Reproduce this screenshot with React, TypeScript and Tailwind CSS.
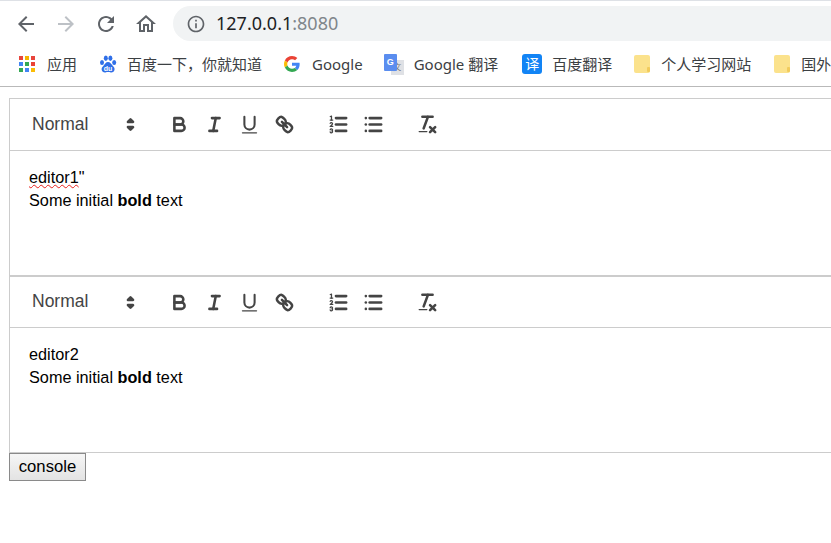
import type { ReactNode } from 'react'

const CJK = 'font-["Noto_Sans","Noto_Sans_CJK_SC",sans-serif]'

function Nav({ d, className }: { d: string; className: string }) {
  return (
    <svg viewBox="0 0 24 24" className={`shrink-0 ${className}`} fill="currentColor">
      <path d={d} />
    </svg>
  )
}

function AppsIcon() {
  const colors = ['#e8453c', '#f4b400', '#e8453c', '#4285f4', '#34a853', '#ea4335', '#34a853', '#4285f4', '#fbbc05']
  return (
    <div className="grid h-[16px] w-[16px] grid-cols-3 gap-[2px]">
      {colors.map((c, i) => (
        <div key={i} style={{ backgroundColor: c }} />
      ))}
    </div>
  )
}

function BaiduIcon() {
  return (
    <svg viewBox="0 0 18 18" className="h-[18px] w-[18px]" fill="#2f6fe8">
      <ellipse cx="3" cy="7.5" rx="2" ry="2.6" />
      <ellipse cx="6.8" cy="3.2" rx="2" ry="2.7" />
      <ellipse cx="11.4" cy="3.2" rx="2" ry="2.7" />
      <ellipse cx="15.2" cy="7.5" rx="2" ry="2.6" />
      <path d="M9 7c-2.2 0-3 2-4.3 3.4C3 12 2.2 13.4 2.8 15.2 3.4 17 5 17.6 6.4 17.4c1-.1 1.8-.3 2.7-.3s1.700.2 2.700.3c1.400.2 3-.4 3.600-2.200.6-1.800-.2-3.200-1.900-4.800C12.200 9 11.200 7 9 7z" />
      <text x="9" y="15.600" textAnchor="middle" fontSize="7" fontWeight="700" fill="#fff" fontFamily="Liberation Sans, sans-serif">du</text>
    </svg>
  )
}

function GoogleIcon() {
  return (
    <svg viewBox="0 0 48 48" className="h-[16px] w-[16px]">
      <path fill="#EA4335" d="M24 9.500c3.540 0 6.710 1.220 9.210 3.600l6.850-6.850C35.900 2.380 30.470 0 24 0 14.620 0 6.510 5.380 2.560 13.220l7.980 6.190C12.430 13.720 17.740 9.500 24 9.500z" />
      <path fill="#4285F4" d="M46.980 24.550c0-1.570-.15-3.090-.38-4.550H24v9.020h12.940c-.58 2.960-2.260 5.480-4.780 7.180l7.730 6c4.510-4.180 7.090-10.360 7.090-17.650z" />
      <path fill="#FBBC05" d="M10.530 28.590c-.48-1.450-.76-2.990-.76-4.590s.270-3.140.760-4.590l-7.980-6.190C.92 16.460 0 20.120 0 24c0 3.880.92 7.540 2.560 10.780l7.970-6.190z" />
      <path fill="#34A853" d="M24 48c6.480 0 11.930-2.130 15.890-5.810l-7.730-6c-2.150 1.450-4.920 2.300-8.160 2.300-6.260 0-11.570-4.220-13.470-9.910l-7.980 6.190C6.510 42.620 14.620 48 24 48z" />
    </svg>
  )
}

function TranslateIcon() {
  return (
    <div className="relative h-[21px] w-[20px]">
      <div className="absolute right-0 bottom-0 flex h-[15px] w-[13px] items-center justify-center bg-[#dfe1e5] text-[8px] leading-none text-[#777]">文</div>
      <div className="absolute top-0 left-0 flex h-[17px] w-[13px] items-center justify-center rounded-[1px] bg-[#5a8def] font-['Liberation_Sans'] text-[9px] font-bold leading-none text-white">G</div>
    </div>
  )
}

function FanyiIcon() {
  return (
    <div className="flex h-[20px] w-[20px] items-center justify-center rounded-[3px] bg-[#1284f5] text-[14px] leading-none text-white">译</div>
  )
}

function FolderIcon() {
  return (
    <div className="relative h-[18px] w-[16px] rounded-[2px] bg-[#fbe28c]">
      <div className="absolute right-0 bottom-[1px] h-[5px] w-[3px] rounded-[1px] bg-[#f1cb5c]" />
    </div>
  )
}

function Bookmark({ icon, label, gap }: { icon: ReactNode; label: string; gap: string }) {
  return (
    <div className={`flex shrink-0 items-center ${gap}`}>
      {icon}
      <span className="whitespace-nowrap text-[15px] leading-none text-[#3c4043]">{label}</span>
    </div>
  )
}

function QlIcon({ children }: { children: ReactNode }) {
  return (
    <svg viewBox="0 0 18 18" className="h-[23px] w-[23px] shrink-0" fill="none" stroke="#444" strokeWidth="2" strokeLinecap="round" strokeLinejoin="round">
      {children}
    </svg>
  )
}

function ToolButton({ children }: { children: ReactNode }) {
  return <div className="flex w-[35px] shrink-0 items-center justify-center">{children}</div>
}

function Toolbar({ height }: { height: string }) {
  return (
    <div className={`flex items-center border-b border-[#ccc] pl-[22px] font-['Liberation_Sans',sans-serif] ${height}`}>
      <div className="flex w-[130px] shrink-0 items-center">
        <span className="text-[17.500px] leading-none text-[#444]">Normal</span>
        <svg viewBox="0 0 18 18" className="ml-[31px] h-[23px] w-[23px]" fill="#444" stroke="#444" strokeWidth="2" strokeLinejoin="round">
          <polygon points="7 11 9 13 11 11 7 11" />
          <polygon points="7 7 9 5 11 7 7 7" />
        </svg>
      </div>
      <ToolButton>
        <QlIcon>
          <path d="M5,4H9.500A2.500,2.500,0,0,1,12,6.500v0A2.500,2.500,0,0,1,9.500,9H5A0,0,0,0,1,5,9V4A0,0,0,0,1,5,4Z" />
          <path d="M5,9h5.500A2.500,2.500,0,0,1,13,11.500v0A2.500,2.500,0,0,1,10.500,14H5a0,0,0,0,1,0,0V9A0,0,0,0,1,5,9Z" />
        </QlIcon>
      </ToolButton>
      <ToolButton>
        <QlIcon>
          <line x1="7" x2="13" y1="4" y2="4" />
          <line x1="5" x2="11" y1="14" y2="14" />
          <line x1="8" x2="10" y1="14" y2="4" />
        </QlIcon>
      </ToolButton>
      <ToolButton>
        <QlIcon>
          <path strokeWidth="1.600" d="M5,3V9a4.012,4.012,0,0,0,4,4H9a4.012,4.012,0,0,0,4-4V3" />
          <rect x="3" y="15" width="12" height="1" rx=".5" ry=".5" fill="#444" stroke="none" />
        </QlIcon>
      </ToolButton>
      <ToolButton>
        <QlIcon>
          <line x1="7" x2="11" y1="7" y2="11" />
          <path d="M8.900,4.577a3.476,3.476,0,0,1,.36,4.679A3.476,3.476,0,0,1,4.577,8.900C3.185,7.500,2.035,6.400,4.217,4.217S7.500,3.185,8.900,4.577Z" />
          <path d="M13.423,9.100a3.476,3.476,0,0,0-4.679-.36,3.476,3.476,0,0,0,.36,4.679c1.392,1.392,2.500,2.542,4.679.36S14.815,10.500,13.423,9.100Z" />
        </QlIcon>
      </ToolButton>
      <div className="w-[19px] shrink-0" />
      <ToolButton>
        <QlIcon>
          <line x1="7" x2="15" y1="4" y2="4" />
          <line x1="7" x2="15" y1="9" y2="9" />
          <line x1="7" x2="15" y1="14" y2="14" />
          <line strokeWidth="1" x1="2.500" x2="4.500" y1="5.500" y2="5.500" />
          <path fill="#444" stroke="none" d="M3.500,6A0.500,0.500,0,0,1,3,5.500V3.085l-0.276.138A0.500,0.500,0,0,1,2.053,3c-0.124-.247-0.023-0.324.224-0.447l1-.5A0.500,0.500,0,0,1,4,2.500v3A0.500,0.500,0,0,1,3.500,6Z" />
          <path strokeWidth="1" d="M4.500,10.500h-2c0-.234,1.850-1.076,1.850-2.234A0.959,0.959,0,0,0,2.500,8.156" />
          <path strokeWidth="1" d="M2.500,14.846a0.959,0.959,0,0,0,1.850-.109A0.700,0.700,0,0,0,3.750,14a0.688,0.688,0,0,0,.6-0.736,0.959,0.959,0,0,0-1.850-.109" />
        </QlIcon>
      </ToolButton>
      <ToolButton>
        <QlIcon>
          <line x1="6" x2="15" y1="4" y2="4" />
          <line x1="6" x2="15" y1="9" y2="9" />
          <line x1="6" x2="15" y1="14" y2="14" />
          <line x1="3" x2="3" y1="4" y2="4" />
          <line x1="3" x2="3" y1="9" y2="9" />
          <line x1="3" x2="3" y1="14" y2="14" />
        </QlIcon>
      </ToolButton>
      <div className="w-[19px] shrink-0" />
      <ToolButton>
        <QlIcon>
          <line x1="5" x2="13" y1="3" y2="3" />
          <line x1="6" x2="9.350" y1="12" y2="3" />
          <line x1="11" x2="15" y1="11" y2="15" />
          <line x1="15" x2="11" y1="11" y2="15" />
          <rect x="2" y="14" width="7" height="1" rx=".5" ry=".5" fill="#444" stroke="none" />
        </QlIcon>
      </ToolButton>
    </div>
  )
}

function Editor({ first, toolbarHeight }: { first: ReactNode; toolbarHeight: string }) {
  return (
    <div className="border border-[#ccc]">
      <Toolbar height={toolbarHeight} />
      <div className="h-[124px] px-[19px] pt-[15px] font-['Liberation_Sans',sans-serif] text-[16.250px] leading-[23px] text-black">
        <p>{first}</p>
        <p>
          Some initial <strong className="font-bold">bold</strong> text
        </p>
      </div>
    </div>
  )
}

export default function App() {
  return (
    <div className="h-[543px] w-[831px] overflow-hidden bg-white">
      {/* browser chrome */}
      <div className={`h-[87px] border-t border-b border-t-[#dee1e6] border-b-[#b9b9b9] ${CJK}`}>
        <div className="flex h-[40px] items-center pt-[5px]">
          <Nav className="ml-[14px] h-[24px] w-[24px] text-[#5f6368]" d="M20 11H7.830l5.590-5.590L12 4l-8 8 8 8 1.410-1.410L7.830 13H20v-2z" />
          <Nav className="ml-[16px] h-[24px] w-[24px] text-[#bdc1c6]" d="M12 4l-1.410 1.410L16.170 11H4v2h12.170l-5.580 5.590L12 20l8-8z" />
          <Nav className="ml-[16px] h-[24px] w-[24px] text-[#5f6368]" d="M17.650 6.350C16.200 4.900 14.210 4 12 4c-4.420 0-7.990 3.580-7.990 8s3.570 8 7.990 8c3.730 0 6.840-2.550 7.730-6h-2.080c-.82 2.330-3.040 4-5.650 4-3.310 0-6-2.690-6-6s2.690-6 6-6c1.660 0 3.140.69 4.220 1.780L13 11h7V4l-2.350 2.350z" />
          <Nav className="ml-[16px] h-[24px] w-[24px] text-[#5f6368]" d="M12 5.690l5 4.500V18h-2v-6H9v6H7v-7.810l5-4.500M12 3L2 12h3v8h6v-6h2v6h6v-8h3L12 3z" />
          <div className="ml-[15px] flex h-[35px] w-[720px] shrink-0 items-center rounded-full bg-[#f1f3f4] pl-[13px]">
            <Nav className="h-[20px] w-[20px] text-[#5f6368]" d="M11 7h2v2h-2zm0 4h2v6h-2zm1-9C6.480 2 2 6.480 2 12s4.480 10 10 10 10-4.480 10-10S17.520 2 12 2zm0 18c-4.410 0-8-3.590-8-8s3.590-8 8-8 8 3.590 8 8-3.590 8-8 8z" />
            <span className="ml-[10px] pb-[2px] text-[18px] leading-none text-[#202124]">
              127.0.0.1<span className="text-[#80868b]">:8080</span>
            </span>
          </div>
        </div>
        <div className="flex h-[45px] items-center gap-[22px] pt-[1px] pl-[19px]">
          <Bookmark icon={<AppsIcon />} label="应用" gap="gap-[12px]" />
          <Bookmark icon={<BaiduIcon />} label="百度一下，你就知道" gap="gap-[10px]" />
          <Bookmark icon={<GoogleIcon />} label="Google" gap="gap-[12px] -mr-[1px]" />
          <Bookmark icon={<TranslateIcon />} label="Google 翻译" gap="gap-[10px] mr-[2px]" />
          <Bookmark icon={<FanyiIcon />} label="百度翻译" gap="gap-[10px]" />
          <Bookmark icon={<FolderIcon />} label="个人学习网站" gap="gap-[11px] mr-[1px]" />
          <Bookmark icon={<FolderIcon />} label="国外" gap="gap-[11px]" />
        </div>
      </div>

      {/* page */}
      <div className="w-[1000px] pt-[11px] pl-[9px]">
        <Editor
          toolbarHeight="h-[52px]"
          first={
            <>
              <span className="underline decoration-[#e8201c] decoration-wavy decoration-1 underline-offset-1">editor1</span>"
            </>
          }
        />
        <Editor toolbarHeight="h-[51px]" first="editor2" />
        <button className="block h-[28px] w-[77px] border border-[#8a8a8a] bg-linear-to-b from-[#f6f6f6] to-[#e3e3e3] font-['Liberation_Sans',sans-serif] text-[16.670px] leading-none text-black">
          console
        </button>
      </div>
    </div>
  )
}
